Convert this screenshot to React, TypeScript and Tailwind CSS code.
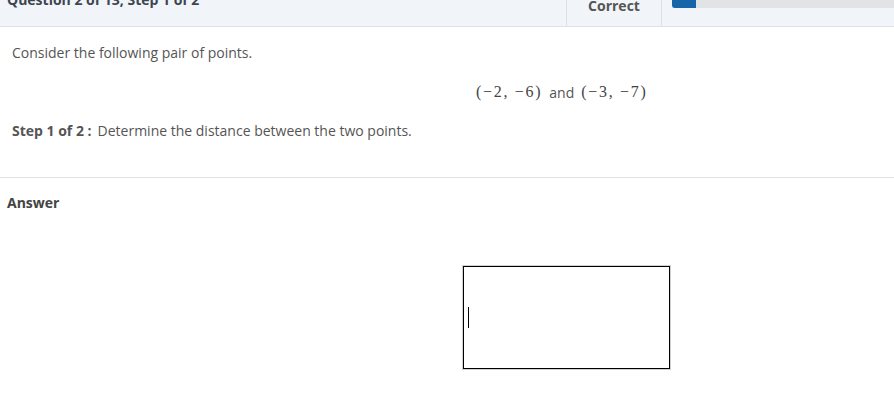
import React from "react";

export default function App() {
  return (
    <div className="w-[894px] h-[405px] bg-white overflow-hidden font-['Open_Sans',sans-serif] text-[#555]">
      <div className="flex h-[27px] bg-[#f1f4f8] border-b border-[#dde1e6] overflow-hidden">
        <div className="flex-1 pl-[7px]">
          <div className="mt-[-7px] text-[14px] leading-[14px] font-bold text-[#3d4550] whitespace-nowrap">
            Question 2 of 13, Step 1 of 2
          </div>
        </div>
        <div className="w-[96px] border-l border-r border-[#dde1e6] flex justify-center">
          <div className="mt-[-1px] text-[14px] leading-[14px] font-bold text-[#555]">Correct</div>
        </div>
        <div className="w-[232px] pl-[10px]">
          <div className="h-[8px] bg-[#e1e3e7] flex">
            <div className="w-[24px] h-full bg-[#1565a8] rounded-bl-[3px]" />
          </div>
        </div>
      </div>

      <div className="pl-[12px] mt-[16px] text-[14px] leading-[20px]">Consider the following pair of points.</div>

      <div className="pl-[476px] mt-[19px] h-[20px] flex items-center whitespace-nowrap">
        <span className="font-['Liberation_Serif',serif] text-[16px] tracking-[1.7px] text-[#444]">(−2, −6)</span>
        <span className="text-[14px] mx-[7px]">and</span>
        <span className="font-['Liberation_Serif',serif] text-[16px] tracking-[1.7px] text-[#444]">(−3, −7)</span>
      </div>

      <div className="pl-[12px] mt-[19px] text-[14px] leading-[20px] whitespace-nowrap">
        <span className="font-bold">Step 1 of 2 :</span>
        <span className="ml-[6px]">Determine the distance between the two points.</span>
      </div>

      <div className="mt-[36px] border-t border-[#e0e0e0]" />

      <div className="pl-[7px] mt-[15px] text-[14px] leading-[20px] font-bold text-[#444]">Answer</div>

      <div className="pl-[462px] mt-[52px]">
        <div className="w-[209px] h-[105px] border border-[#d0d0d0]">
          <div className="w-full h-full border border-black flex items-center pl-[4px]">
            <div className="w-[1px] h-[21px] bg-black" />
          </div>
        </div>
      </div>
    </div>
  );
}
